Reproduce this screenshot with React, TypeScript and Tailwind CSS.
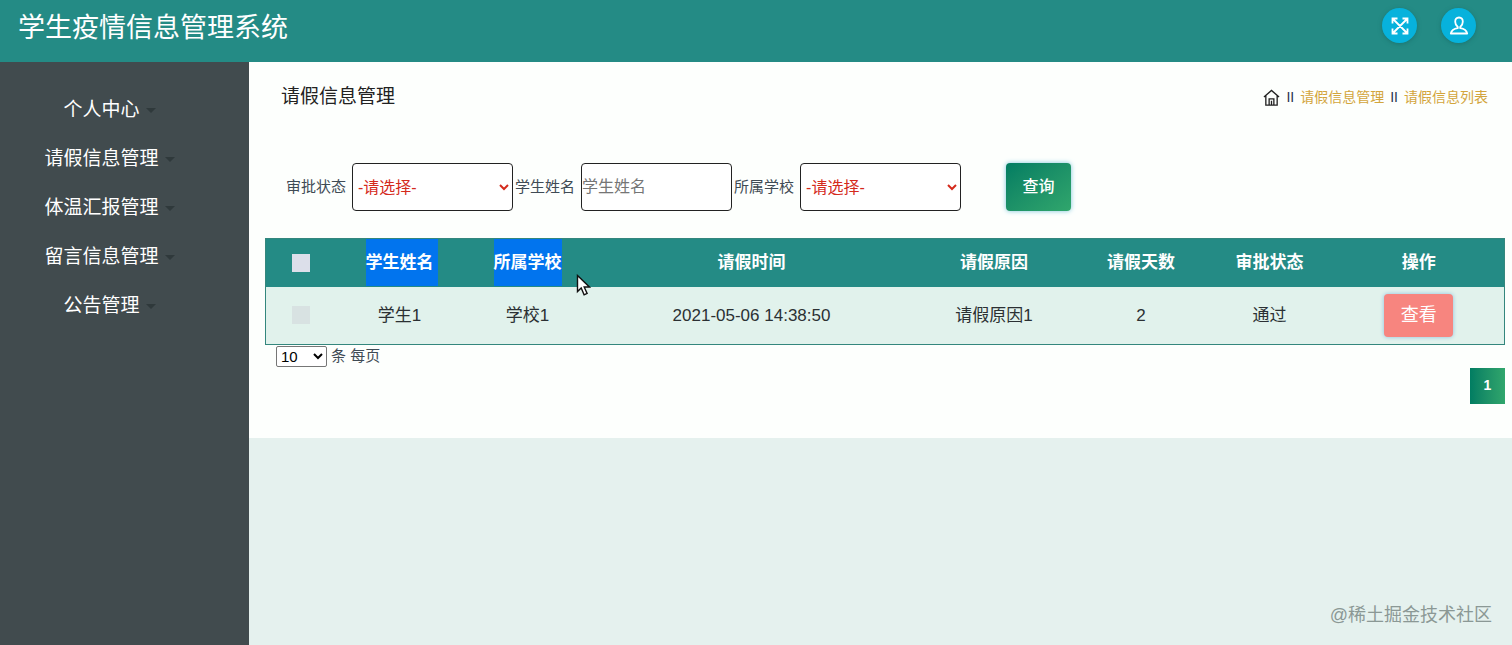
import { useState } from "react";

const menuItems = ["个人中心", "请假信息管理", "体温汇报管理", "留言信息管理", "公告管理"];

const columns = [
  { title: "学生姓名", width: "w-[128px]", highlight: "-mr-1 inline-block bg-[#0174ee] pr-1 align-top" },
  { title: "所属学校", width: "w-[128px]", highlight: "inline-block bg-[#0174ee] align-top" },
  { title: "请假时间", width: "w-[320px]" },
  { title: "请假原因", width: "w-[165px]" },
  { title: "请假天数", width: "w-[129px]" },
  { title: "审批状态", width: "w-[128px]" },
  { title: "操作", width: "w-[171px]" },
];

const rows = [
  { id: 1, name: "学生1", school: "学校1", time: "2021-05-06 14:38:50", reason: "请假原因1", days: 2, status: "通过" },
];

function FullscreenIcon() {
  return (
    <svg width="18" height="18" viewBox="0 0 18 18" fill="none" stroke="currentColor" strokeWidth="1.8">
      <path d="M2 2l14 14M16 2L2 16M1.500 6.500V1.500h5M11.500 1.500h5v5M16.500 11.500v5h-5M6.500 16.500h-5v-5" />
    </svg>
  );
}

function UserIcon() {
  return (
    <svg width="20" height="20" viewBox="0 0 20 20" fill="none" stroke="currentColor" strokeWidth="1.8" strokeLinejoin="round">
      <path d="M10 1.500c-2.600 0-3.800 1.800-3.800 4.200 0 2.300 1 4 2.600 5.300v1.200c-3.300.5-6.300 2-7 5.300h16.400c-.7-3.300-3.700-4.800-7-5.300V11c1.600-1.300 2.600-3 2.600-5.300 0-2.400-1.200-4.200-3.800-4.200z" />
    </svg>
  );
}

function HomeIcon() {
  return (
    <svg width="17" height="17" viewBox="0 0 18 18" fill="none" stroke="currentColor" strokeWidth="1.400">
      <path d="M1 8.500L9 1.500l8 7M3 7v10h12V7M6.500 17v-6.500h5V17M9 12.500V17" />
    </svg>
  );
}

function Sidebar() {
  return (
    <nav className="w-[249px] shrink-0 bg-[#414b4e] pt-6 pr-[30px]">
      <ul>
        {menuItems.map((item) => (
          <li key={item}>
            <a href="#" className="flex h-[49px] items-center justify-center gap-[6px] text-[19px] text-white">
              {item}
              <span className="border-x-[5px] border-t-[5px] border-x-transparent border-t-[#2f393b]" />
            </a>
          </li>
        ))}
      </ul>
    </nav>
  );
}

function SearchForm() {
  const [status, setStatus] = useState("");
  const [name, setName] = useState("");
  const [school, setSchool] = useState("");

  return (
    <form className="flex items-center pl-[37px] text-[15px] text-[#3f4b55]" onSubmit={(e) => e.preventDefault()}>
      <label htmlFor="status" className="mr-[6px]">审批状态</label>
      <select id="status" value={status} onChange={(e) => setStatus(e.target.value)} className="mr-[2px] h-12 w-[161px] rounded-[4px] border border-[#222] bg-white pl-px text-[16px] text-[#d42a1c]">
        <option value="">-请选择-</option>
      </select>
      <label htmlFor="name" className="mr-[6px]">学生姓名</label>
      <input id="name" type="text" placeholder="学生姓名" value={name} onChange={(e) => setName(e.target.value)} className="mr-[2px] h-12 w-[151px] rounded-[4px] border border-[#222] bg-white text-[16px] placeholder:text-[#757575]" />
      <label htmlFor="school" className="mr-[6px]">所属学校</label>
      <select id="school" value={school} onChange={(e) => setSchool(e.target.value)} className="h-12 w-[161px] rounded-[4px] border border-[#222] bg-white pl-px text-[16px] text-[#d42a1c]">
        <option value="">-请选择-</option>
      </select>
      <button type="submit" className="ml-[45px] h-12 w-[65px] rounded-[4px] bg-linear-to-br from-[#017d62] to-[#30a66c] text-[16px] font-medium text-white shadow-[0_0_5px_#7cc4dc]">
        查询
      </button>
    </form>
  );
}

function LeaveTable() {
  return (
    <table className="w-full table-fixed border border-[#34877d] text-center text-[17px] text-[#2b3033]">
      <thead className="bg-[#248b85] text-white">
        <tr className="h-12">
          <th className="w-[70px] p-0">
            <input type="checkbox" aria-label="全选" className="mx-auto block size-[18px] appearance-none bg-[#dcdfea]" />
          </th>
          {columns.map((col) => (
            <th key={col.title} className={`${col.width} p-0 leading-[47px]`}>
              <span className={col.highlight}>{col.title}</span>
            </th>
          ))}
        </tr>
      </thead>
      <tbody className="bg-[#e1f2ec]">
        {rows.map((row) => (
          <tr key={row.id} className="h-[58px]">
            <td>
              <input type="checkbox" aria-label={row.name} className="mx-auto block size-[18px] appearance-none bg-[#d8e2e2]" />
            </td>
            <td>{row.name}</td>
            <td>{row.school}</td>
            <td>{row.time}</td>
            <td>{row.reason}</td>
            <td>{row.days}</td>
            <td>{row.status}</td>
            <td>
              <button type="button" className="h-[43px] w-[69px] rounded-[4px] bg-[#f7857f] align-middle text-[18px] text-white shadow-[0_0_4px_#8fc0dc]">
                查看
              </button>
            </td>
          </tr>
        ))}
      </tbody>
    </table>
  );
}

export default function App() {
  const [pageSize, setPageSize] = useState("10");

  return (
    <div className="relative flex min-h-screen flex-col bg-[#e5f1ee] font-['Liberation_Sans','Noto_Sans_CJK_SC',sans-serif]">
      <header className="flex h-[62px] items-start justify-between bg-[#248b85] pr-9 pl-[18px] text-white">
        <h1 className="text-[27px] leading-[56px]">学生疫情信息管理系统</h1>
        <div className="flex gap-6 pt-2">
          <button type="button" aria-label="全屏" className="flex size-[35px] items-center justify-center rounded-full bg-[#07b2dc] shadow-[0_1px_4px_#1c7470]">
            <FullscreenIcon />
          </button>
          <button type="button" aria-label="用户" className="flex size-[35px] items-center justify-center rounded-full bg-[#07b2dc] shadow-[0_1px_4px_#1c7470]">
            <UserIcon />
          </button>
        </div>
      </header>

      <div className="flex flex-1">
        <Sidebar />
        <main className="min-w-0 flex-1">
          <section className="bg-[#fdfffd] pb-[34px]">
            <div className="flex h-[70px] items-center justify-between pr-6 pl-8">
              <h2 className="text-[19px] text-[#222]">请假信息管理</h2>
              <div className="flex items-center gap-[6px] text-[14px] text-[#26334f]">
                <a href="#" aria-label="首页" className="text-[#222]">
                  <HomeIcon />
                </a>
                <span>II</span>
                <a href="#" className="text-[#d3a53c]">请假信息管理</a>
                <span>II</span>
                <a href="#" className="text-[#d3a53c]">请假信息列表</a>
              </div>
            </div>

            <div className="pt-[31px]">
              <SearchForm />
            </div>

            <div className="pt-[27px] pr-[7px] pl-4">
              <LeaveTable />
              <div className="flex items-center gap-1 pl-[11px] text-[15px] text-[#3f4b55]">
                <select id="pageSize" value={pageSize} onChange={(e) => setPageSize(e.target.value)} className="h-[21px] w-[51px] rounded-[2px] border border-[#767676] bg-white text-[15px] text-black">
                  <option value="10">10</option>
                  <option value="20">20</option>
                </select>
                <label htmlFor="pageSize">条 每页</label>
              </div>
              <div className="flex justify-end">
                <button type="button" className="h-9 w-[35px] bg-linear-to-r from-[#017d62] to-[#30a66c] text-[14px] font-bold text-white">
                  1
                </button>
              </div>
            </div>
          </section>
        </main>
      </div>

      {/* mouse pointer */}
      <svg className="absolute top-[274px] left-[576px]" width="15" height="23" viewBox="0 0 15 23">
        <path d="M1.500 1.500v16l3.700-3.500 2.900 6.800 3-1.300-2.900-6.500h5.200z" fill="#fff" stroke="#111" strokeWidth="1.4" />
      </svg>

      <p className="absolute right-5 bottom-4 text-[18px] text-[#8b9895]">@稀土掘金技术社区</p>
    </div>
  );
}
